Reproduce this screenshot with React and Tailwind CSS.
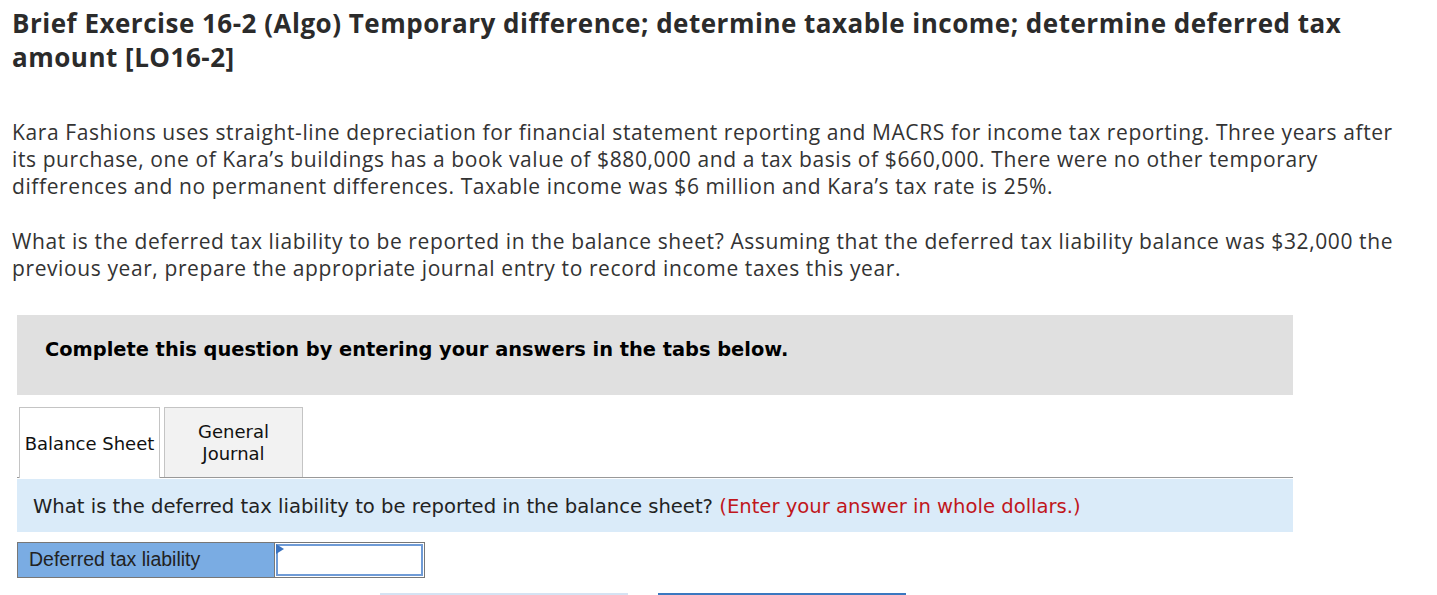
import React from "react";

export default function App() {
  return (
    <div className="w-[1437px] h-[595px] overflow-hidden bg-white relative">
      <div className="pl-[12px] pt-[6px] font-['Open_Sans',sans-serif] whitespace-nowrap">
        <h1 className="font-bold text-[26px] leading-[34px] tracking-[0.5px] text-[#2b2b2b]">
          Brief Exercise 16-2 (Algo) Temporary difference; determine taxable income; determine deferred tax<br />
          amount [LO16-2]
        </h1>
        <div className="mt-[45px] text-[21px] leading-[27px] tracking-[0.6px] text-[#333]">
          <p>
            Kara Fashions uses straight-line depreciation for financial statement reporting and MACRS for income tax reporting. Three years after<br />
            its purchase, one of Kara’s buildings has a book value of $880,000 and a tax basis of $660,000. There were no other temporary<br />
            differences and no permanent differences. Taxable income was $6 million and Kara’s tax rate is 25%.
          </p>
          <p className="mt-[28px]">
            What is the deferred tax liability to be reported in the balance sheet? Assuming that the deferred tax liability balance was $32,000 the<br />
            previous year, prepare the appropriate journal entry to record income taxes this year.
          </p>
        </div>
      </div>

      <div className="ml-[17px] w-[1276px] mt-[33px] font-['DejaVu_Sans',Verdana,sans-serif]">
        <div className="h-[80px] bg-[#e0e0e0] flex items-center pl-[28px] pb-[11px]">
          <span className="font-bold text-[19.4px] text-black">Complete this question by entering your answers in the tabs below.</span>
        </div>
        <div className="mt-[12px] flex items-end gap-[4px] border-b border-[#999] pl-[2px] h-[71px]">
          <div className="w-[141px] h-[71px] border border-b-0 border-[#c4c4c4] bg-white flex items-center justify-center text-[18px] text-[#111] -mb-px">
            Balance Sheet
          </div>
          <div className="w-[139px] h-[70px] border border-b-0 border-[#c4c4c4] bg-[#f2f2f2] flex items-center justify-center text-center text-[18px] leading-[22px] text-[#111]">
            General<br />Journal
          </div>
        </div>
        <div className="mt-[1px] h-[53px] bg-[#daebf9] flex items-center pl-[16px] pt-[2px] text-[19.6px] text-[#222]">
          <span>What is the deferred tax liability to be reported in the balance sheet? <span className="text-[#c0161c]">(Enter your answer in whole dollars.)</span></span>
        </div>
        <div className="mt-[10px] flex h-[36px]">
          <div className="w-[258px] h-[36px] bg-[#7aace3] border border-[#777] flex items-center pl-[11px] text-[19.5px] text-[#222] font-['Liberation_Sans',Arial,sans-serif]">
            Deferred tax liability
          </div>
          <div className="relative w-[150px] h-[36px] border border-l-0 border-[#777] bg-white p-[1px]">
            <div className="w-full h-full border-2 border-[#6f9bd6] bg-white"></div>
            <svg className="absolute left-[1px] top-[1px]" width="8" height="14" viewBox="0 0 8 14">
              <polygon points="0,0 8,5 0,10" fill="#3a72bf" />
            </svg>
          </div>
        </div>
      </div>

      <div className="absolute left-[380px] top-[593px] w-[248px] h-[4px] bg-[#d5e3f3]"></div>
      <div className="absolute left-[658px] top-[593px] w-[248px] h-[4px] bg-[#3a78c0]"></div>
    </div>
  );
}
